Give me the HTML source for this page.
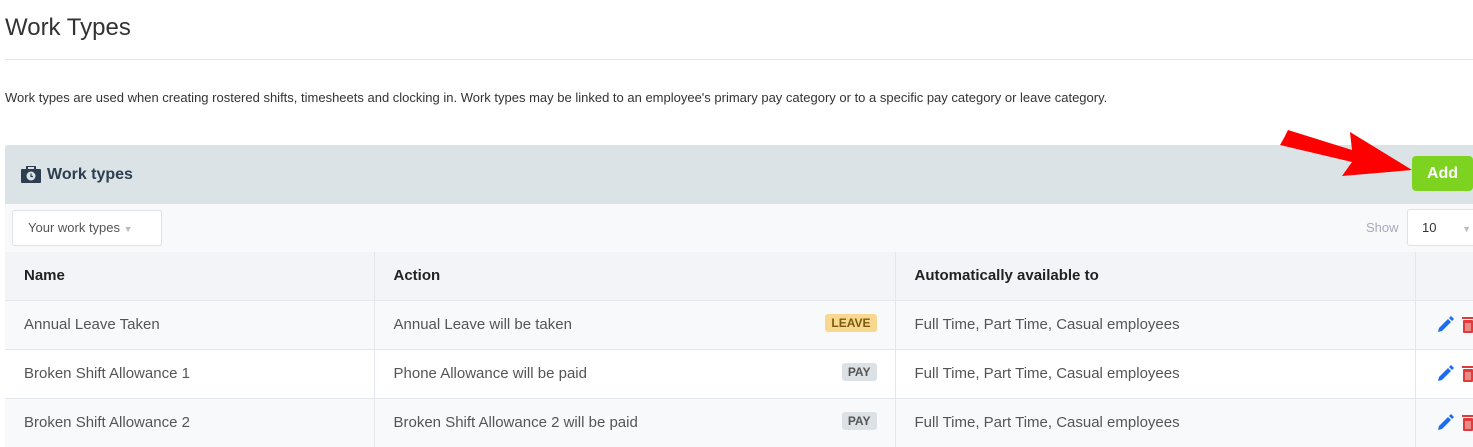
<!DOCTYPE html><html><head><style>
body{margin:0;width:1473px;height:445px;overflow:hidden;background:#fff;font-family:"Liberation Sans",sans-serif;position:relative;color:#333}
.a{position:absolute}
td{box-sizing:border-box}
</style></head><body>
<div class="a" style="left:5px;top:14px;font-size:24px;color:#333">Work Types</div>
<div class="a" style="left:5px;top:59px;width:1468px;height:1px;background:#e3e6ea"></div>
<div class="a" style="left:5px;top:90px;font-size:13px;color:#333">Work types are used when creating rostered shifts, timesheets and clocking in. Work types may be linked to an employee's primary pay category or to a specific pay category or leave category.</div>
<div class="a" style="left:5px;top:145px;width:1468px;height:59px;background:#dce3e7;border-radius:3px 0 0 0"></div>
<svg class="a" style="left:21px;top:166px" width="20" height="17" viewBox="0 0 20 17"><rect x="6" y="0" width="8" height="4" rx="1" fill="none" stroke="#2c3e50" stroke-width="2"/><rect x="0" y="3" width="20" height="14" rx="1" fill="#2c3e50"/><circle cx="10" cy="10" r="4.5" fill="#dce3e7"/><path d="M10 7.5v3h2" stroke="#2c3e50" stroke-width="1.2" fill="none"/></svg>
<div class="a" style="left:47px;top:166px;font-size:16px;font-weight:bold;color:#2c3e50">Work types</div>
<div class="a" style="left:1412px;top:156px;width:61px;height:35px;background:#7ed321;border-radius:4px;color:#fff;font-weight:bold;font-size:16px;line-height:35px;text-align:center">Add</div>
<svg class="a" style="left:1280px;top:128px" width="135" height="50"><polygon points="4,10 8,2 72,22 70,4 132,42 62,48 72,34 0,17" fill="#f00"/></svg>
<div class="a" style="left:5px;top:204px;width:1468px;height:48px;background:#f7f9fb"></div>
<div class="a" style="left:12px;top:210px;width:148px;height:34px;background:#fff;border:1px solid #dde2e6;border-radius:3px;font-size:13px;color:#555;line-height:34px;text-indent:15px">Your work types <span style="color:#bbb;font-size:9px">▼</span></div>
<div class="a" style="left:1366px;top:220px;font-size:13px;color:#aab">Show</div>
<div class="a" style="left:1407px;top:209px;width:70px;height:35px;background:#fff;border:1px solid #dde2e6;border-radius:3px;font-size:13px;line-height:35px;text-indent:14px">10 <span style="color:#bbb;font-size:9px;margin-left:22px">▼</span></div>
<table class="a" style="left:5px;top:252px;border-collapse:collapse;font-size:15px;color:#555;table-layout:fixed;width:1468px" >
<colgroup><col style="width:369px"><col style="width:521px"><col style="width:520px"><col style="width:58px"></colgroup>
<tr style="height:48px;background:#f2f4f7;color:#222;font-weight:bold;font-size:15px"><td style="padding-left:19px;border-right:1px solid #e3e7eb">Name</td><td style="padding-left:19px;border-right:1px solid #e3e7eb">Action</td><td style="padding-left:19px;border-right:1px solid #e3e7eb">Automatically available to</td><td></td></tr>
<tr style="height:49px;background:#f7f9fb;border-top:1px solid #e3e7eb"><td style="padding-left:19px;border-right:1px solid #e3e7eb">Annual Leave Taken</td><td style="padding-left:19px;border-right:1px solid #e3e7eb;position:relative">Annual Leave will be taken<span style="position:absolute;right:18px;top:13px;background:#f8d78e;color:#7a5a10;font-size:12px;font-weight:bold;padding:2px 6px;border-radius:3px">LEAVE</span></td><td style="padding-left:19px;border-right:1px solid #e3e7eb">Full Time, Part Time, Casual employees</td><td><svg width="40" height="20" style="display:block;margin-left:20px;margin-top:-2px"><path d="M1 18l1-4 9-9 3 3-9 9z" fill="#1a6cf0"/><path d="M12 4l2-2 3 3-2 2z" fill="#1a6cf0"/><rect x="26" y="6" width="10" height="13" rx="1" fill="#e03a3a"/><rect x="25" y="3" width="12" height="2" fill="#e03a3a"/><path d="M29 9v8M31 9v8M33 9v8" stroke="#fff" stroke-width="0.8"/></svg></td></tr>
<tr style="height:49px;background:#fff;border-top:1px solid #e3e7eb"><td style="padding-left:19px;border-right:1px solid #e3e7eb">Broken Shift Allowance 1</td><td style="padding-left:19px;border-right:1px solid #e3e7eb;position:relative">Phone Allowance will be paid<span style="position:absolute;right:18px;top:13px;background:#dce1e5;color:#555;font-size:12px;font-weight:bold;padding:2px 6px;border-radius:3px">PAY</span></td><td style="padding-left:19px;border-right:1px solid #e3e7eb">Full Time, Part Time, Casual employees</td><td><svg width="40" height="20" style="display:block;margin-left:20px;margin-top:-2px"><path d="M1 18l1-4 9-9 3 3-9 9z" fill="#1a6cf0"/><path d="M12 4l2-2 3 3-2 2z" fill="#1a6cf0"/><rect x="26" y="6" width="10" height="13" rx="1" fill="#e03a3a"/><rect x="25" y="3" width="12" height="2" fill="#e03a3a"/><path d="M29 9v8M31 9v8M33 9v8" stroke="#fff" stroke-width="0.8"/></svg></td></tr>
<tr style="height:49px;background:#f7f9fb;border-top:1px solid #e3e7eb"><td style="padding-left:19px;border-right:1px solid #e3e7eb">Broken Shift Allowance 2</td><td style="padding-left:19px;border-right:1px solid #e3e7eb;position:relative">Broken Shift Allowance 2 will be paid<span style="position:absolute;right:18px;top:13px;background:#dce1e5;color:#555;font-size:12px;font-weight:bold;padding:2px 6px;border-radius:3px">PAY</span></td><td style="padding-left:19px;border-right:1px solid #e3e7eb">Full Time, Part Time, Casual employees</td><td><svg width="40" height="20" style="display:block;margin-left:20px;margin-top:-2px"><path d="M1 18l1-4 9-9 3 3-9 9z" fill="#1a6cf0"/><path d="M12 4l2-2 3 3-2 2z" fill="#1a6cf0"/><rect x="26" y="6" width="10" height="13" rx="1" fill="#e03a3a"/><rect x="25" y="3" width="12" height="2" fill="#e03a3a"/><path d="M29 9v8M31 9v8M33 9v8" stroke="#fff" stroke-width="0.8"/></svg></td></tr>
</table>
</body></html>
